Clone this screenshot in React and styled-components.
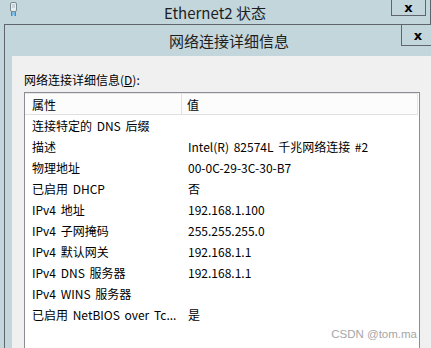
import React from "react";
import styled, { createGlobalStyle } from "styled-components";

const Global = createGlobalStyle`
  html, body { margin: 0; padding: 0; }
  body {
    width: 431px; height: 348px; overflow: hidden;
    background: #c3d6dc;
    font-family: "Noto Sans CJK SC", "Noto Sans", sans-serif;
  }
`;

const Page = styled.div`
  position: relative;
  width: 431px;
  height: 348px;
  overflow: hidden;
  background: #c3d6dc;
`;

const TitleBar = styled.div`
  position: relative;
  display: flex;
  align-items: center;
  justify-content: center;
  height: ${p => p.$h}px;
  box-sizing: border-box;
  border-right: ${p => (p.$frame ? "1px solid #5e666c" : "none")};
`;

const TitleText = styled.div`
  font-size: 15px;
  color: #1e1e1e;
  line-height: 1;
  transform: translateX(${p => p.$dx || 0}px);
`;

const AppIcon = styled.svg`
  position: absolute;
  left: 9px;
  top: 2px;
`;

const CloseBtn = styled.div`
  position: absolute;
  right: ${p => p.$right}px;
  top: ${p => p.$top}px;
  width: ${p => p.$w}px;
  height: ${p => p.$h}px;
  border: 1px solid #5e666c;
  background: #c3d6dc;
  display: flex;
  align-items: center;
  justify-content: center;
  font-family: "DejaVu Sans", sans-serif;
  font-weight: bold;
  font-size: 13px;
  line-height: 1;
  color: #000;
  box-sizing: border-box;
`;

const Dialog = styled.div`
  margin-left: 4px;
  width: 440px;
  border-top: 1px solid #5e666c;
  border-left: 1px solid #5e666c;
`;

const Content = styled.div`
  margin-left: 7px;
  background: #f0f0f0;
  height: 300px;
  padding: 16px 0 0 12px;
  box-sizing: border-box;
`;

const Label = styled.div`
  font-size: 12px;
  color: #000;
  line-height: 16px;
  height: 16px;
  margin-bottom: 4px;
  u { text-decoration: underline; }
`;

const ListBox = styled.div`
  width: 396px;
  height: 280px;
  box-sizing: border-box;
  border: 1px solid #8a8d92;
  border-bottom: none;
  background: #fff;
`;

const HeaderRow = styled.div`
  display: grid;
  grid-template-columns: 157px 1fr;
  height: 22px;
  margin-right: 1px;
  background: #fcfcfc;
  border-top: 1px solid #e6e6e6;
  border-bottom: 1px solid #e0e0e0;
  border-right: 1px solid #e6e6e6;
  box-sizing: border-box;
`;

const HeaderCell = styled.div`
  font-size: 12px;
  line-height: 21px;
  padding-left: ${p => p.$pl}px;
  border-right: ${p => (p.$div ? "1px solid #e0e0e0" : "none")};
  color: #000;
`;

const Row = styled.div`
  display: grid;
  grid-template-columns: 157px 1fr;
  height: 21px;
  align-items: center;
`;

const Cell = styled.div`
  font-size: 12px;
  line-height: 21px;
  word-spacing: 2px;
  padding-left: ${p => p.$pl}px;
  white-space: nowrap;
  overflow: hidden;
  color: #000;
`;

const Watermark = styled.div`
  position: absolute;
  right: 14px;
  bottom: 8px;
  font-family: "Liberation Sans", Arial, sans-serif;
  font-size: 11.5px;
  color: #a6a6a6;
`;

const rows = [
  ["连接特定的 DNS 后缀", ""],
  ["描述", "Intel(R) 82574L 千兆网络连接 #2"],
  ["物理地址", "00-0C-29-3C-30-B7"],
  ["已启用 DHCP", "否"],
  ["IPv4 地址", "192.168.1.100"],
  ["IPv4 子网掩码", "255.255.255.0"],
  ["IPv4 默认网关", "192.168.1.1"],
  ["IPv4 DNS 服务器", "192.168.1.1"],
  ["IPv4 WINS 服务器", ""],
  ["已启用 NetBIOS over Tc...", "是"],
];

export default function App() {
  return (
    <Page>
      <Global />
      <TitleBar $h={24} $frame>
        <AppIcon width="9" height="15" viewBox="0 0 9 15">
          <rect x="1.5" y="0.5" width="6" height="9" rx="1.5" fill="#e8eef0" stroke="#7c8a92" />
          <rect x="3" y="2" width="3" height="4" fill="#c9d3d8" />
          <rect x="2" y="10" width="1.5" height="4" fill="#2f8fd8" />
          <rect x="5.5" y="10" width="1.5" height="4" fill="#2f8fd8" />
          <rect x="3.5" y="10" width="2" height="3" fill="#7cc0ee" />
        </AppIcon>
        <TitleText>Ethernet2 状态</TitleText>
        <CloseBtn $right={4} $top={-2} $w={35} $h={18}>x</CloseBtn>
      </TitleBar>
      <Dialog>
        <TitleBar $h={31}>
          <TitleText $dx={4}>网络连接详细信息</TitleText>
          <CloseBtn $right={10} $top={-1} $w={34} $h={22}>x</CloseBtn>
        </TitleBar>
        <Content>
          <Label>
            网络连接详细信息(<u>D</u>):
          </Label>
          <ListBox>
            <HeaderRow>
              <HeaderCell $pl={7} $div>属性</HeaderCell>
              <HeaderCell $pl={5}>值</HeaderCell>
            </HeaderRow>
            {rows.map(([k, v], i) => (
              <Row key={i}>
                <Cell $pl={7}>{k}</Cell>
                <Cell $pl={6}>{v}</Cell>
              </Row>
            ))}
          </ListBox>
        </Content>
      </Dialog>
      <Watermark>CSDN @tom.ma</Watermark>
    </Page>
  );
}
